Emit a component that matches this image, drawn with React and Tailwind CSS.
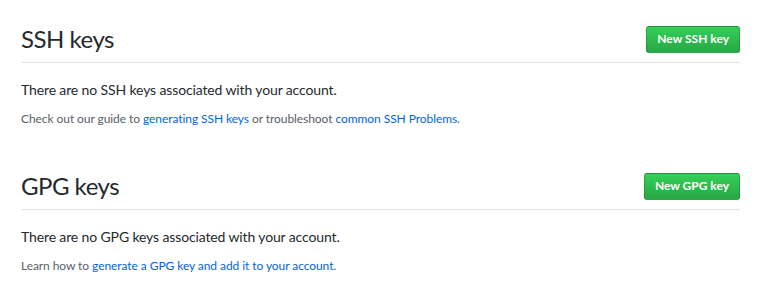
export default function App() {
  const sections = [
    {
      title: "SSH keys",
      button: "New SSH key",
      empty: "There are no SSH keys associated with your account.",
      help: (
        <>
          Check out our guide to{" "}
          <a href="#" className="text-[#0366d6]">generating SSH keys</a> or
          troubleshoot{" "}
          <a href="#" className="text-[#0366d6]">common SSH Problems</a>.
        </>
      ),
    },
    {
      title: "GPG keys",
      button: "New GPG key",
      empty: "There are no GPG keys associated with your account.",
      help: (
        <>
          Learn how to{" "}
          <a href="#" className="text-[#0366d6]">
            generate a GPG key and add it to your account
          </a>
          .
        </>
      ),
    },
  ];

  return (
    <div
      className="min-h-screen bg-white pl-[21px] pr-[28px] pt-[24px] text-[#24292e]"
      style={{ fontFamily: '"Segoe UI", Lato, "Noto Sans", sans-serif' }}
    >
      {sections.map((s, i) => (
        <section key={s.title} className={i > 0 ? "mt-[43px]" : ""}>
          <div className="flex items-center justify-between border-b border-[#e1e4e8] pb-2">
            <h2 className="text-[24px] font-normal leading-[30px] tracking-[-0.5px]">
              {s.title}
            </h2>
            <button className="h-[27px] rounded-[3px] border border-[rgba(27,31,35,0.2)] bg-gradient-to-b from-[#34d058] to-[#28a745] px-[10px] text-[12px] font-bold text-white">
              {s.button}
            </button>
          </div>
          <p className="mt-4 text-[14px] leading-[21px] tracking-[-0.13px]">
            {s.empty}
          </p>
          <p className="mt-[10px] text-[12px] leading-[18px] tracking-[-0.07px] text-[#586069]">
            {s.help}
          </p>
        </section>
      ))}
    </div>
  );
}
